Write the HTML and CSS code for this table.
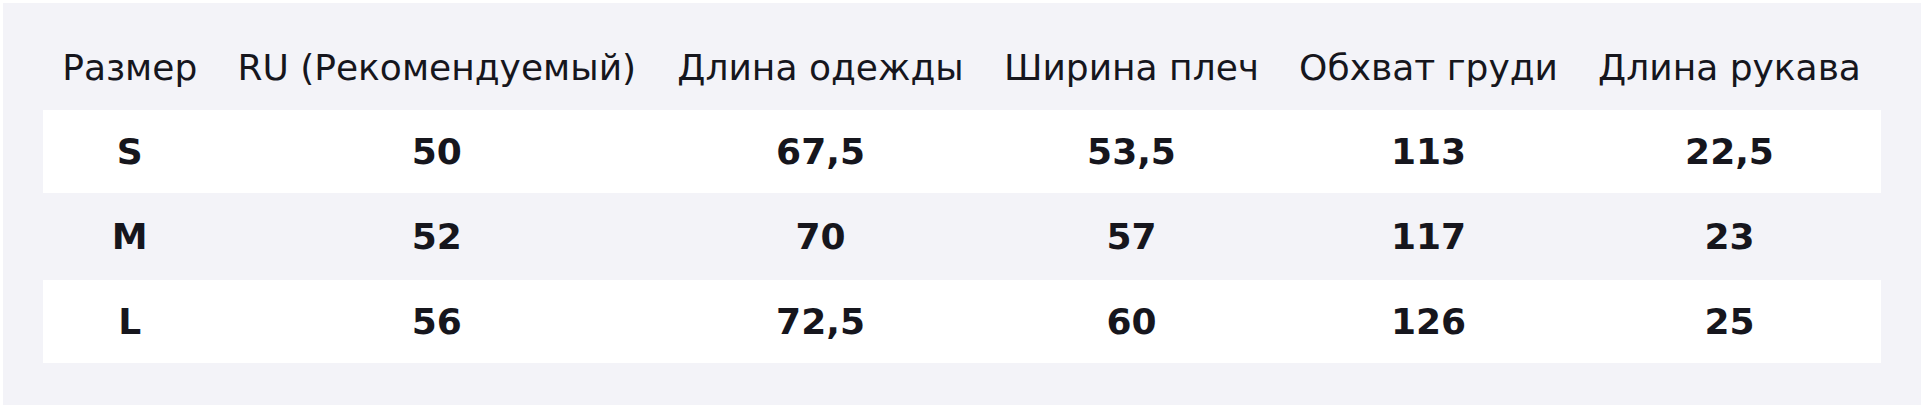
FILE: index.html
```html
<!DOCTYPE html>
<html lang="ru">
<head>
<meta charset="utf-8">
<title>Таблица размеров</title>
<link rel="stylesheet" href="styles.css">
</head>
<body>
<div class="panel">
  <table class="sizes">
    <thead>
      <tr>
        <th>Размер</th>
        <th>RU (Рекомендуемый)</th>
        <th>Длина одежды</th>
        <th>Ширина плеч</th>
        <th>Обхват груди</th>
        <th>Длина рукава</th>
      </tr>
    </thead>
    <tbody>
      <tr class="stripe">
        <td>S</td><td>50</td><td>67,5</td><td>53,5</td><td>113</td><td>22,5</td>
      </tr>
      <tr>
        <td>M</td><td>52</td><td>70</td><td>57</td><td>117</td><td>23</td>
      </tr>
      <tr class="stripe">
        <td>L</td><td>56</td><td>72,5</td><td>60</td><td>126</td><td>25</td>
      </tr>
    </tbody>
  </table>
</div>
</body>
</html>
```
FILE: styles.css
```css
html, body {
  margin: 0;
  background: #ffffff;
}
body {
  padding: 3px;
  font-family: "DejaVu Sans", sans-serif;
  color: #16161d;
}
.panel {
  background: #f3f3f8;
  padding: 40px 40px 40px;
  height: 402px;
  box-sizing: border-box;
}
.sizes {
  width: 100%;
  border-collapse: separate;
  border-spacing: 0 2px;
  font-size: 36px;
}
.sizes th {
  font-weight: normal;
  line-height: 42px;
  padding: 2px 18px 19px;
  text-align: center;
  white-space: nowrap;
}
.sizes td {
  font-weight: bold;
  height: 83px;
  padding: 0 18px;
  text-align: center;
  vertical-align: middle;
  line-height: 42px;
  white-space: nowrap;
  box-sizing: border-box;
}
.sizes .stripe td {
  background: #ffffff;
}
```
